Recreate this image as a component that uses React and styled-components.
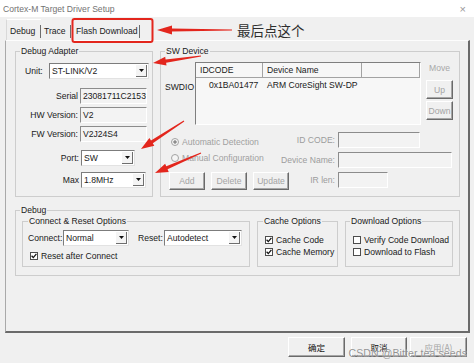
import React from 'react';
import styled, { createGlobalStyle } from 'styled-components';

const GlobalStyle = createGlobalStyle`
  html, body { margin: 0; padding: 0; background: #f0f0f0; }
  body {
    font-family: "Liberation Sans", Arial, "Noto Sans CJK SC", sans-serif;
    font-size: 8.6px;
    color: #1a1a1a;
  }
`;

const Window = styled.div`
  position: relative;
  width: 474px;
  height: 363px;
  overflow: hidden;
  background: #f0f0f0;
`;

const TitleBar = styled.div`
  height: 17px;
  background: #fff;
  display: flex;
  align-items: center;
  justify-content: space-between;
  padding: 0 8px 0 3px;
  color: #727272;
`;

const CloseMark = styled.span`
  font-size: 11px;
  color: #9a9a9a;
`;

const TabStrip = styled.div`
  height: 23px;
  display: flex;
  align-items: flex-end;
  padding-left: 6px;
`;

const Tab = styled.div`
  box-sizing: border-box;
  width: ${p => p.$w}px;
  height: 21px;
  display: flex;
  align-items: flex-end;
  border-left: ${p => (p.$active ? '1px solid #d9d9d9' : 'none')};
  border-top: ${p => (p.$active ? '1px solid #fff' : 'none')};
`;

const TabText = styled.span`
  flex: 1;
  line-height: 13px;
  margin-bottom: 2px;
  padding-left: ${p => p.$pl}px;
  border-right: 1px solid #6d6d6d;
  white-space: nowrap;
`;

const TabPanel = styled.div`
  box-sizing: border-box;
  margin-left: 5px;
  width: 465px;
  height: 293px;
  border-top: 1px solid #fdfdfd;
  border-left: 1px solid #a9a9a9;
  border-right: 2px solid #6a6a6a;
  border-bottom: 2px solid #6a6a6a;
  padding: 5px 8px 0 9px;
`;

const Group = styled.fieldset`
  box-sizing: border-box;
  margin: ${p => p.$mt || 0}px 0 0 0;
  min-width: 0;
  width: ${p => p.$w}px;
  padding: ${p => p.$pad};
  border: 1px solid #cdcdcd;
  overflow: hidden;
`;

const Legend = styled.legend`
  padding: 0 1px;
  margin-left: ${p => p.$ml || 0}px;
  line-height: 11px;
  white-space: nowrap;
`;

const TopRow = styled.div`
  display: flex;
  gap: 7px;
  align-items: stretch;
`;

const FieldRow = styled.div`
  display: flex;
  align-items: center;
  height: 16px;
  margin-top: ${p => p.$mt || 0}px;
`;

const RowLabel = styled.span`
  flex: none;
  width: ${p => p.$w}px;
  margin-left: ${p => p.$ml || 0}px;
  margin-right: 2px;
  text-align: ${p => p.$align || 'right'};
  white-space: nowrap;
  color: ${p => (p.$dim ? '#9c9c9c' : 'inherit')};
`;

const TextField = styled.div`
  box-sizing: border-box;
  flex: none;
  width: ${p => p.$w}px;
  height: 16px;
  border: 1px solid;
  border-color: #8c8c8c #fff #fff #8c8c8c;
  background: #f3f3f3;
  padding-left: 2px;
  line-height: 14px;
  overflow: hidden;
  white-space: nowrap;
`;

const SelectBox = styled.div`
  box-sizing: border-box;
  flex: none;
  display: flex;
  width: ${p => p.$w}px;
  height: 16px;
  border: 1px solid;
  border-color: #7c7c7c #e2e2e2 #e2e2e2 #7c7c7c;
  background: #fff;
`;

const SelectValue = styled.span`
  flex: 1;
  padding-left: 2px;
  line-height: 14px;
  overflow: hidden;
  white-space: nowrap;
`;

const DropButton = styled.span`
  box-sizing: border-box;
  flex: none;
  width: 11px;
  margin: 1px;
  display: flex;
  align-items: center;
  justify-content: center;
  background: #f4f4f4;
  border-right: 1px solid #6e6e6e;
  border-bottom: 1px solid #6e6e6e;
`;

const SwTop = styled.div`
  display: flex;
  margin-top: 5px;
`;

const SwdioLabel = styled.span`
  flex: none;
  width: 30px;
  padding-top: 20px;
  line-height: 11px;
`;

const DeviceTable = styled.div`
  box-sizing: border-box;
  flex: none;
  width: 226px;
  height: 63px;
  border: 1px solid;
  border-color: #7f7f7f #fff #fff #7f7f7f;
  background: #f7f7f7;
`;

const TableLine = styled.div`
  display: grid;
  grid-template-columns: 67px 99px 1fr;
  height: ${p => p.$h}px;
`;

const HeadCell = styled.span`
  border-right: 1px solid #a3a3a3;
  border-bottom: 1px solid #a3a3a3;
  padding-left: 4px;
  line-height: 14px;
`;

const BodyCell = styled.span`
  padding-left: ${p => p.$pl}px;
  line-height: 14px;
  white-space: nowrap;
`;

const MoveColumn = styled.div`
  flex: none;
  width: 27px;
  margin-left: 5px;
  display: flex;
  flex-direction: column;
`;

const DimLabel = styled.span`
  height: 12px;
  line-height: 12px;
  text-align: center;
  color: #a8a8a8;
`;

const RaisedButton = styled.div`
  box-sizing: border-box;
  flex: none;
  width: ${p => p.$w}px;
  height: ${p => p.$h}px;
  margin-top: ${p => p.$mt || 0}px;
  margin-left: ${p => p.$ml || 0}px;
  display: flex;
  align-items: center;
  justify-content: center;
  border: 1px solid;
  border-color: #fff #6a6a6a #6a6a6a #fff;
  box-shadow: inset -1px -1px 0 #a6a6a6;
  background: #f0f0f0;
  color: ${p => (p.$disabled ? '#a4a4a4' : '#111')};
  font-weight: ${p => (p.$bold ? 'bold' : 'normal')};
  white-space: nowrap;
`;

const SwBottom = styled.div`
  display: flex;
`;

const DetectColumn = styled.div`
  flex: none;
  width: 120px;
  margin-left: 4px;
  display: flex;
  flex-direction: column;
`;

const OptionRow = styled.div`
  display: flex;
  align-items: center;
  gap: ${p => p.$gap || 3}px;
  height: 11px;
  margin-top: ${p => p.$mt || 0}px;
  padding-left: ${p => p.$pl || 0}px;
  color: ${p => (p.$dim ? '#a0a0a0' : 'inherit')};
  white-space: nowrap;
`;

const Radio = styled.span`
  box-sizing: border-box;
  flex: none;
  width: 8px;
  height: 8px;
  border-radius: 50%;
  border: 1px solid #a3a3a3;
  background: ${p =>
    p.$on ? 'radial-gradient(circle, #8d8d8d 0 1.4px, #f5f5f5 1.9px)' : '#f5f5f5'};
`;

const ButtonRow = styled.div`
  display: flex;
  gap: 6px;
  margin-top: ${p => p.$mt}px;
`;

const ConfigGrid = styled.div`
  display: grid;
  grid-template-columns: 46px auto;
  grid-auto-rows: 16px;
  column-gap: 3px;
  row-gap: 4px;
  align-items: center;
  justify-items: start;
  margin-top: 7px;
`;

const ConfigLabel = styled.span`
  justify-self: end;
  color: #9c9c9c;
  white-space: nowrap;
`;

const DebugRow = styled.div`
  display: flex;
  gap: 7px;
  align-items: stretch;
`;

const CheckBox = styled.span`
  box-sizing: border-box;
  flex: none;
  width: 8px;
  height: 8px;
  border: 1px solid #4d4d4d;
  background: #fff;
  display: flex;
  align-items: center;
  justify-content: center;
`;

const Footer = styled.div`
  display: flex;
  justify-content: flex-end;
  padding: 4px 7px 0 0;
`;

const FooterButton = styled(RaisedButton)`
  font-family: "Noto Sans CJK SC", "Liberation Sans", sans-serif;
  font-size: 8.5px;
`;

const Overlay = styled.svg`
  position: absolute;
  left: 0;
  top: 0;
  pointer-events: none;
`;

const Note = styled.span`
  position: absolute;
  left: 237px;
  top: 21px;
  font-family: "Noto Sans CJK SC", sans-serif;
  font-size: 13.5px;
  line-height: 18px;
  color: #2e2e2e;
`;

const Watermark = styled.span`
  position: absolute;
  right: 7px;
  bottom: 4px;
  font-size: 10.5px;
  color: rgba(110, 110, 110, 0.75);
  text-shadow: 0 0 1px #fff;
  letter-spacing: 0.1px;
`;

function Dropdown({ w, value }) {
  return (
    <SelectBox $w={w}>
      <SelectValue>{value}</SelectValue>
      <DropButton>
        <svg width="5" height="3" viewBox="0 0 5 3">
          <path d="M0 0h5L2.5 3z" fill="#111" />
        </svg>
      </DropButton>
    </SelectBox>
  );
}

function Check({ on }) {
  return (
    <CheckBox>
      {on && (
        <svg width="6" height="6" viewBox="0 0 6 6">
          <path d="M0.6 2.8 L2.3 4.6 L5.4 0.9" stroke="#111" strokeWidth="1.3" fill="none" />
        </svg>
      )}
    </CheckBox>
  );
}

// tapered red arrow, tail -> tip
function arrowPoints(x1, y1, x2, y2, head = 13, hw = 4.5, sw = 1.6) {
  const dx = x2 - x1;
  const dy = y2 - y1;
  const len = Math.hypot(dx, dy);
  const ux = dx / len;
  const uy = dy / len;
  const nx = -uy;
  const ny = ux;
  const bx = x2 - ux * head;
  const by = y2 - uy * head;
  const pts = [
    [x1 + nx * 0.5, y1 + ny * 0.5],
    [bx + nx * sw, by + ny * sw],
    [bx + nx * hw, by + ny * hw],
    [x2, y2],
    [bx - nx * hw, by - ny * hw],
    [bx - nx * sw, by - ny * sw],
    [x1 - nx * 0.5, y1 - ny * 0.5],
  ];
  return pts.map(p => p.map(v => v.toFixed(1)).join(',')).join(' ');
}

const arrows = [
  [232, 30, 157, 30, 15, 4.5, 1.6],
  [201, 56, 153, 63],
  [184, 121, 141, 149],
  [201, 153, 155, 173],
];

export default function App() {
  return (
    <Window>
      <GlobalStyle />
      <TitleBar>
        <span>Cortex-M Target Driver Setup</span>
        <CloseMark>×</CloseMark>
      </TitleBar>

      <TabStrip>
        <Tab $w={35} $active>
          <TabText $pl={3}>Debug</TabText>
        </Tab>
        <Tab $w={30}>
          <TabText $pl={3}>Trace</TabText>
        </Tab>
        <Tab $w={69}>
          <TabText $pl={5}>Flash Download</TabText>
        </Tab>
      </TabStrip>

      <TabPanel>
        <TopRow>
          <Group $w={138} $pad="6px 4px 8px 4px">
            <Legend>Debug Adapter</Legend>
            <FieldRow>
              <RowLabel $w={22} $ml={5} $align="left">Unit:</RowLabel>
              <Dropdown w={100} value="ST-LINK/V2" />
            </FieldRow>
            <FieldRow $mt={9}>
              <RowLabel $w={58}>Serial</RowLabel>
              <TextField $w={67}>23081711C21530</TextField>
            </FieldRow>
            <FieldRow $mt={3}>
              <RowLabel $w={58}>HW Version:</RowLabel>
              <TextField $w={67}>V2</TextField>
            </FieldRow>
            <FieldRow $mt={3}>
              <RowLabel $w={58}>FW Version:</RowLabel>
              <TextField $w={67}>V2J24S4</TextField>
            </FieldRow>
            <FieldRow $mt={8}>
              <RowLabel $w={59}>Port:</RowLabel>
              <Dropdown w={54} value="SW" />
            </FieldRow>
            <FieldRow $mt={6}>
              <RowLabel $w={59}>Max</RowLabel>
              <Dropdown w={65} value="1.8MHz" />
            </FieldRow>
          </Group>

          <Group $w={300} $pad="0 6px 0 4px">
            <Legend>SW Device</Legend>
            <SwTop>
              <SwdioLabel>SWDIO</SwdioLabel>
              <DeviceTable>
                <TableLine $h={15}>
                  <HeadCell>IDCODE</HeadCell>
                  <HeadCell>Device Name</HeadCell>
                  <HeadCell />
                </TableLine>
                <TableLine $h={14}>
                  <BodyCell $pl={13}>0x1BA01477</BodyCell>
                  <BodyCell $pl={4}>ARM CoreSight SW-DP</BodyCell>
                  <BodyCell $pl={4} />
                </TableLine>
              </DeviceTable>
              <MoveColumn>
                <DimLabel>Move</DimLabel>
                <RaisedButton $w={27} $h={19} $mt={6} $disabled>Up</RaisedButton>
                <RaisedButton $w={27} $h={19} $mt={2} $disabled>Down</RaisedButton>
              </MoveColumn>
            </SwTop>
            <SwBottom>
              <DetectColumn>
                <OptionRow $mt={11} $pl={2} $dim>
                  <Radio $on />
                  Automatic Detection
                </OptionRow>
                <OptionRow $mt={5} $pl={2} $dim>
                  <Radio />
                  Manual Configuration
                </OptionRow>
                <ButtonRow $mt={9}>
                  <RaisedButton $w={36} $h={18} $disabled>Add</RaisedButton>
                  <RaisedButton $w={36} $h={18} $disabled>Delete</RaisedButton>
                  <RaisedButton $w={36} $h={18} $disabled>Update</RaisedButton>
                </ButtonRow>
              </DetectColumn>
              <ConfigGrid>
                <ConfigLabel>ID CODE:</ConfigLabel>
                <TextField $w={82} />
                <ConfigLabel>Device Name:</ConfigLabel>
                <TextField $w={114} />
                <ConfigLabel>IR len:</ConfigLabel>
                <TextField $w={50} />
              </ConfigGrid>
            </SwBottom>
          </Group>
        </TopRow>

        <Group $w={445} $mt={8} $pad="0 6px 8px 6px">
          <Legend $ml={-2}>Debug</Legend>
          <DebugRow>
            <Group $w={228} $pad="3px 4px 5px 5px">
              <Legend>Connect &amp; Reset Options</Legend>
              <FieldRow>
                <RowLabel $w={33} $align="left">Connect:</RowLabel>
                <Dropdown w={66} value="Normal" />
                <RowLabel $w={24} $ml={9} $align="left">Reset:</RowLabel>
                <Dropdown w={78} value="Autodetect" />
              </FieldRow>
              <OptionRow $mt={4} $pl={2}>
                <Check on />
                Reset after Connect
              </OptionRow>
            </Group>
            <Group $w={81} $pad="7px 2px 0 7px">
              <Legend $ml={-2}>Cache Options</Legend>
              <OptionRow>
                <Check on />
                Cache Code
              </OptionRow>
              <OptionRow $mt={1}>
                <Check on />
                Cache Memory
              </OptionRow>
            </Group>
            <Group $w={108} $pad="7px 0 0 7px">
              <Legend $ml={-3}>Download Options</Legend>
              <OptionRow>
                <Check />
                Verify Code Download
              </OptionRow>
              <OptionRow $mt={1}>
                <Check />
                Download to Flash
              </OptionRow>
            </Group>
          </DebugRow>
        </Group>
      </TabPanel>

      <Footer>
        <FooterButton $w={57} $h={20}>确定</FooterButton>
        <FooterButton $w={56} $h={20} $ml={6}>取消</FooterButton>
        <FooterButton $w={57} $h={20} $ml={3} $disabled>应用(A)</FooterButton>
      </Footer>

      <Overlay width="474" height="363" viewBox="0 0 474 363">
        <rect x="72.5" y="19" width="80" height="23" rx="2" fill="none" stroke="#e3261d" strokeWidth="2" />
        {arrows.map((a, i) => (
          <polygon key={i} points={arrowPoints(...a)} fill="#e3261d" />
        ))}
      </Overlay>
      <Note>最后点这个</Note>
      <Watermark>CSDN @Bitter tea seeds</Watermark>
    </Window>
  );
}
